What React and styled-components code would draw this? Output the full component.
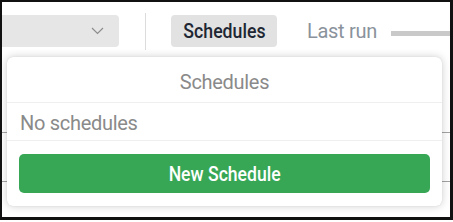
import React from 'react'
import styled, { createGlobalStyle } from 'styled-components'

const GlobalStyle = createGlobalStyle`
  html, body {
    margin: 0;
    padding: 0;
    background: #fff;
  }
  body {
    font-family: Roboto, "Liberation Sans", sans-serif;
  }
`

const Frame = styled.div`
  position: relative;
  box-sizing: border-box;
  width: 453px;
  height: 220px;
  border: 2px solid #111;
  border-right-width: 3px;
  border-bottom-width: 3px;
  overflow: hidden;
  background: #fff;
`

const Toolbar = styled.div`
  display: flex;
  align-items: center;
  height: 38px;
  padding-top: 10px;
`

const Select = styled.div`
  display: flex;
  align-items: center;
  justify-content: flex-end;
  box-sizing: border-box;
  width: 157px;
  height: 32px;
  margin-left: -40px;
  padding-right: 15px;
  background: #e6e6e6;
  border-radius: 4px;
  color: #8d8d8d;
`

const Separator = styled.div`
  width: 1px;
  height: 37px;
  margin: 0 25px 0 26px;
  background: #dcdcdc;
`

const ToolButton = styled.button`
  height: 32px;
  width: 106px;
  padding: 0;
  border: none;
  border-radius: 4px;
  background: #e2e2e2;
  color: #1e2733;
  font-family: inherit;
  font-size: 20px;
  font-weight: 500;
  cursor: pointer;
`

const Condensed = styled.span`
  display: inline-block;
  transform: scaleX(${p => p.$scale || 0.88});
  transform-origin: center;
`

const LastRun = styled.span`
  margin-left: 30px;
  font-size: 20px;
  letter-spacing: -0.3px;
  color: #8a929c;
`

const RunBar = styled.div`
  flex: 1;
  height: 5px;
  margin: 4px -20px 0 14px;
  background: #c9c9c9;
`

const Table = styled.div`
  margin-top: 34px;
`

const Row = styled.div`
  height: 48px;
  border-bottom: 1px solid #a3a3a3;
`

const Popover = styled.div`
  position: absolute;
  left: 5px;
  top: 55px;
  width: 435px;
  background: #fff;
  border-radius: 6px;
  box-shadow: 0 0 8px rgba(0, 0, 0, 0.2), 0 0 1px rgba(0, 0, 0, 0.15);
  display: flex;
  flex-direction: column;
`

const Header = styled.div`
  height: 46px;
  display: flex;
  align-items: center;
  justify-content: center;
  padding-top: 5px;
  box-sizing: border-box;
  font-size: 20px;
  letter-spacing: -0.3px;
  color: #8a8a8a;
  border-bottom: 1px solid #efefef;
`

const Empty = styled.div`
  height: 38px;
  display: flex;
  align-items: center;
  padding-left: 13px;
  padding-top: 3px;
  box-sizing: border-box;
  font-size: 20px;
  letter-spacing: -0.3px;
  color: #8a8a8a;
  border-bottom: 1px solid #efefef;
`

const Footer = styled.div`
  padding: 13px 12px 13px 12px;
`

const PrimaryButton = styled.button`
  width: 100%;
  height: 39px;
  padding-top: 1px;
  border: none;
  border-radius: 5px;
  background: #37a756;
  color: #fff;
  font-family: inherit;
  font-size: 20px;
  font-weight: 500;
  cursor: pointer;
`

const Chevron = () => (
  <svg width="13" height="8" viewBox="0 0 13 8" fill="none">
    <path d="M1 1l5.5 5.5L12 1" stroke="currentColor" strokeWidth="1.2" />
  </svg>
)

export default function App() {
  return (
    <>
      <GlobalStyle />
      <Frame>
        <Toolbar>
          <Select>
            <Chevron />
          </Select>
          <Separator />
          <ToolButton>
            <Condensed $scale={0.885}>Schedules</Condensed>
          </ToolButton>
          <LastRun>Last run</LastRun>
          <RunBar />
        </Toolbar>
        <Table>
          <Row />
          <Row />
        </Table>
        <Popover>
          <Header>Schedules</Header>
          <Empty>No schedules</Empty>
          <Footer>
            <PrimaryButton>
              <Condensed $scale={0.88}>New Schedule</Condensed>
            </PrimaryButton>
          </Footer>
        </Popover>
      </Frame>
    </>
  )
}
